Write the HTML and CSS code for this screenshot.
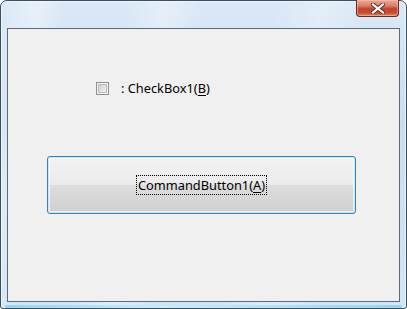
FILE: index.html
```html
<!DOCTYPE html>
<html>
<head>
<meta charset="utf-8">
<link rel="stylesheet" href="styles.css">
</head>
<body>
<div class="window">
  <div class="titlebar">
    <div class="close">
      <svg width="14" height="11" viewBox="0 0 14 11">
        <path d="M2 1.5 L12 9.5 M12 1.5 L2 9.5" stroke="#5b2a22" stroke-width="4" stroke-linecap="square" fill="none"/>
        <path d="M2 1.5 L12 9.5 M12 1.5 L2 9.5" stroke="#ffffff" stroke-width="2.2" stroke-linecap="square" fill="none"/>
      </svg>
    </div>
  </div>
  <div class="client">
    <label class="check-row">
      <span class="checkbox"></span>
      <span class="check-label">: CheckBox1(<u>B</u>)</span>
    </label>
    <button class="cmd"><span class="focus">CommandButton1(<u>A</u>)</span></button>
  </div>
</div>
</body>
</html>
```
FILE: styles.css
```css
html, body {
  margin: 0;
  padding: 0;
  background: #ffffff;
}
body {
  font-family: "Noto Sans", "Open Sans", sans-serif;
}
.window {
  position: relative;
  width: 407px;
  height: 309px;
  box-sizing: border-box;
  border: 1px solid #3c4d5c;
  border-radius: 7px 7px 3px 3px;
  background:
    linear-gradient(100deg, rgba(255,255,255,0) 0%, rgba(255,255,255,0.35) 8%, rgba(255,255,255,0) 14%, rgba(255,255,255,0) 28%, rgba(255,255,255,0.3) 36%, rgba(255,255,255,0) 44%, rgba(255,255,255,0) 60%, rgba(255,255,255,0.25) 70%, rgba(255,255,255,0) 80%),
    linear-gradient(180deg, #dbe9f7 0%, #c9def2 40%, #d3e5f5 100%);
  box-shadow: inset 0 0 0 1px rgba(255,255,255,0.55);
  padding: 0 6px 6px 6px;
  display: flex;
  flex-direction: column;
}
.window::after {
  content: "";
  position: absolute;
  left: 4px; right: 4px; bottom: 0;
  height: 3px;
  background: linear-gradient(90deg, #7fd3ee, #bfeeff 40%, #7fd3ee);
  border-radius: 2px;
  opacity: 0.8;
}
.titlebar {
  height: 27px;
  flex: none;
  display: flex;
  justify-content: flex-end;
  align-items: flex-start;
}
.close {
  width: 43px;
  height: 17px;
  margin-top: -1px;
  margin-right: 1px;
  box-sizing: border-box;
  border: 1px solid #5e2c24;
  border-top: none;
  border-radius: 0 0 4px 4px;
  background: linear-gradient(180deg, #e9a999 0%, #d9826d 35%, #c5432b 55%, #c94b32 80%, #df8a6e 100%);
  box-shadow: inset 0 0 0 1px rgba(255,200,180,0.5);
  display: flex;
  align-items: center;
  justify-content: center;
}
.close svg { display: block; margin-top: 1px; }
.client {
  flex: 1;
  background: #f0f0f0;
  border: 1px solid #5d6b78;
  display: flex;
  flex-direction: column;
  align-items: flex-start;
  padding-left: 39px;
  z-index: 1;
}
.check-row {
  display: flex;
  align-items: center;
  margin-top: 53px;
  margin-left: 49px;
  height: 13px;
}
.checkbox {
  width: 13px;
  height: 13px;
  box-sizing: border-box;
  border: 1px solid #8e8f8f;
  background: linear-gradient(135deg, #c4c4c4, #e6e6e6 60%, #f6f6f6);
  box-shadow: inset 0 0 0 1px #f4f4f4, inset 0 0 0 2px #bdbdbd;
}
.check-label {
  margin-left: 12px;
  font-size: 12.8px;
  color: #000;
  line-height: 13px;
}
.check-label u, .focus u { text-decoration-thickness: 1px; text-underline-offset: 2px; }
.cmd {
  margin-top: 61px;
  width: 309px;
  height: 58px;
  box-sizing: border-box;
  border: 1px solid #3c7fb1;
  border-radius: 3px;
  background: linear-gradient(180deg, #f2f2f2 0%, #ebebeb 49%, #dddddd 50%, #cfcfcf 100%);
  box-shadow: inset 0 0 0 1px #c2e9f8, inset 0 0 0 2px rgba(255,255,255,0.6);
  font-family: "Noto Sans", "Open Sans", sans-serif;
  font-size: 12.8px;
  color: #000;
  padding: 0;
  display: flex;
  align-items: center;
  justify-content: center;
}
.focus {
  border: 1px dotted #000;
  padding: 2px 1px 2px 1px;
  line-height: 14px;
}
```
